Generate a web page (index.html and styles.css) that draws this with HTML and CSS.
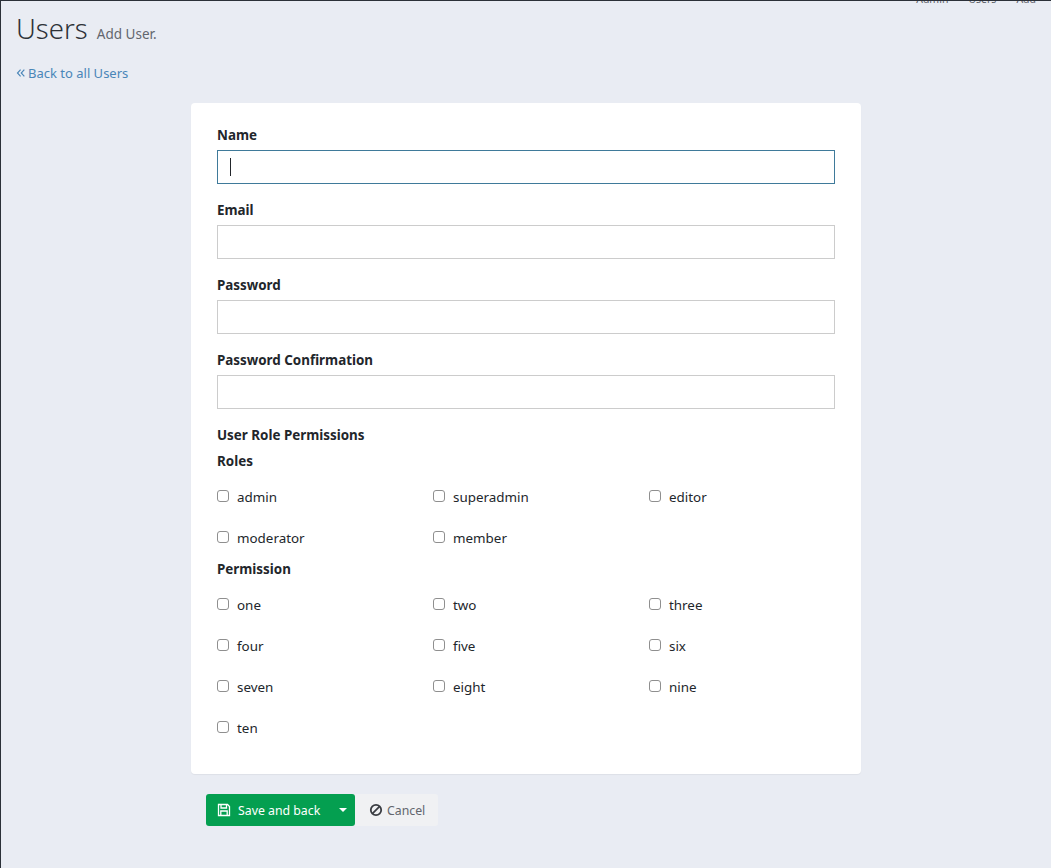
FILE: index.html
```html
<!DOCTYPE html>
<html lang="en">
<head>
    <meta charset="UTF-8">
    <title>Users</title>
    <link rel="stylesheet" href="styles.css">
</head>
<body>
    <nav class="top-nav">
        <a href="#">Admin</a>
        <a href="#">Users</a>
        <a href="#">Add</a>
    </nav>

    <section class="page-head">
        <h1>Users <small>Add User.</small></h1>
        <a href="#" class="back-link">
            <svg class="back-icon" viewBox="0 0 12 12"><path d="M5.5 2 1.8 6l3.7 4M10 2 6.3 6l3.7 4"/></svg>Back to all Users
        </a>
    </section>

    <form class="card">
        <div class="input-group">
            <label>Name</label>
            <input type="text" class="focused">
            <span class="caret"></span>
        </div>
        <div class="input-group">
            <label>Email</label>
            <input type="email">
        </div>
        <div class="input-group">
            <label>Password</label>
            <input type="password">
        </div>
        <div class="input-group">
            <label>Password Confirmation</label>
            <input type="password">
        </div>

        <label class="heading">User Role Permissions</label>
        <label>Roles</label>
        <div class="check-grid">
            <label class="check"><input type="checkbox"> admin</label>
            <label class="check"><input type="checkbox"> superadmin</label>
            <label class="check"><input type="checkbox"> editor</label>
            <label class="check"><input type="checkbox"> moderator</label>
            <label class="check"><input type="checkbox"> member</label>
        </div>
        <label>Permission</label>
        <div class="check-grid">
            <label class="check"><input type="checkbox"> one</label>
            <label class="check"><input type="checkbox"> two</label>
            <label class="check"><input type="checkbox"> three</label>
            <label class="check"><input type="checkbox"> four</label>
            <label class="check"><input type="checkbox"> five</label>
            <label class="check"><input type="checkbox"> six</label>
            <label class="check"><input type="checkbox"> seven</label>
            <label class="check"><input type="checkbox"> eight</label>
            <label class="check"><input type="checkbox"> nine</label>
            <label class="check"><input type="checkbox"> ten</label>
        </div>
    </form>

    <div class="actions">
        <a href="#" class="btn-save">
            <svg class="icon" viewBox="0 0 14 14"><path d="M1.5 1.5h9l2 2v9h-11zM4 1.5v3.5h5.5V1.5M3.8 12.5V8h6.4v4.5"/></svg>
            Save and back
        </a>
        <a href="#" class="btn-caret"><span></span></a>
        <a href="#" class="btn-cancel">
            <svg class="icon" viewBox="0 0 14 14"><circle cx="7" cy="7" r="5.2"/><path d="M3.4 10.6 10.6 3.4"/></svg>
            Cancel
        </a>
    </div>
</body>
</html>
```

FILE: styles.css
```css
* {
    margin: 0;
    padding: 0;
    box-sizing: border-box;
    font-family: "Noto Sans", sans-serif;
}

html, body {
    height: 100%;
    overflow: hidden;
}

body {
    background-color: #e9ecf3;
    border-top: 1px solid #2b3038;
    border-left: 1px solid #2b3038;
    color: #22262b;
    font-size: 14px;
}

/* nav is cut off by the top of the window */
.top-nav {
    display: flex;
    justify-content: flex-end;
    gap: 20px;
    height: 20px;
    margin-top: -12px;
    padding-right: 15px;
    line-height: 20px;
}

.top-nav a {
    font-size: 10.5px;
    color: #5c6068;
    text-decoration: none;
}

.page-head {
    padding: 2px 15px 0;
}

h1 {
    font-size: 27.5px;
    font-weight: 300;
    line-height: 36px;
    color: #2e3238;
}

h1 small {
    margin-left: 2px;
    font-size: 13.5px;
    font-weight: 400;
    line-height: 1;
    color: #62666d;
}

.back-link {
    display: block;
    margin-top: 16px;
    font-size: 13px;
    line-height: 20px;
    color: #4a86b8;
    text-decoration: none;
}

.back-icon {
    width: 10px;
    height: 10px;
    margin-right: 2px;
    fill: none;
    stroke: #4a86b8;
    stroke-width: 1.4;
}

.card {
    width: 670px;
    margin: 20px 0 0 190px;
    padding: 22px 26px 25px;
    background: #fff;
    border-radius: 4px;
    box-shadow: 0 1px 1px rgba(0, 0, 0, 0.05);
}

label {
    display: block;
    height: 21px;
    margin-bottom: 5px;
    font-size: 13.4px;
    font-weight: 700;
    line-height: 21px;
    color: #22262b;
}

.input-group {
    position: relative;
    margin-bottom: 16px;
}

.input-group label {
    margin-bottom: 4px;
}

.input-group input {
    display: block;
    width: 100%;
    height: 34px;
    border: 1px solid #ccc;
    background: #fff;
    outline: none;
}

.input-group input.focused {
    border-color: #3f7a9a;
}

.caret {
    position: absolute;
    left: 13px;
    top: 33px;
    width: 1px;
    height: 18px;
    background: #22262b;
}

.check-grid {
    display: grid;
    grid-template-columns: repeat(3, 216px);
    grid-auto-rows: 41px;
}

label.check {
    display: flex;
    align-items: center;
    gap: 8px;
    height: 41px;
    margin: 0;
    font-size: 13.4px;
    font-weight: 400;
}

.check input {
    appearance: none;
    width: 12px;
    height: 12px;
    margin: 0 0 4px;
    background: #fff;
    border: 1px solid #8f8f8f;
    border-radius: 3px;
}

.actions {
    display: flex;
    height: 32px;
    margin: 20px 0 0 205px;
}

.actions a {
    display: flex;
    align-items: center;
    font-size: 12.3px;
    text-decoration: none;
}

.btn-save {
    gap: 7px;
    width: 126px;
    padding-left: 11px;
    background: #049f50;
    color: #fff;
    border-radius: 3px 0 0 3px;
}

.btn-caret {
    justify-content: center;
    width: 23px;
    padding-right: 2px;
    background: #049f50;
    border-radius: 0 3px 3px 0;
}

.btn-caret span {
    border-top: 4px solid #fff;
    border-left: 4px solid transparent;
    border-right: 4px solid transparent;
}

.btn-cancel {
    gap: 4px;
    width: 83px;
    padding-left: 14px;
    background: #f0f1f3;
    color: #62666d;
    border-radius: 0 3px 3px 0;
}

.icon {
    width: 14px;
    height: 14px;
    fill: none;
    stroke: #fff;
    stroke-width: 1.3;
}

.btn-cancel .icon {
    stroke: #3a3d42;
    stroke-width: 1.8;
}
```
